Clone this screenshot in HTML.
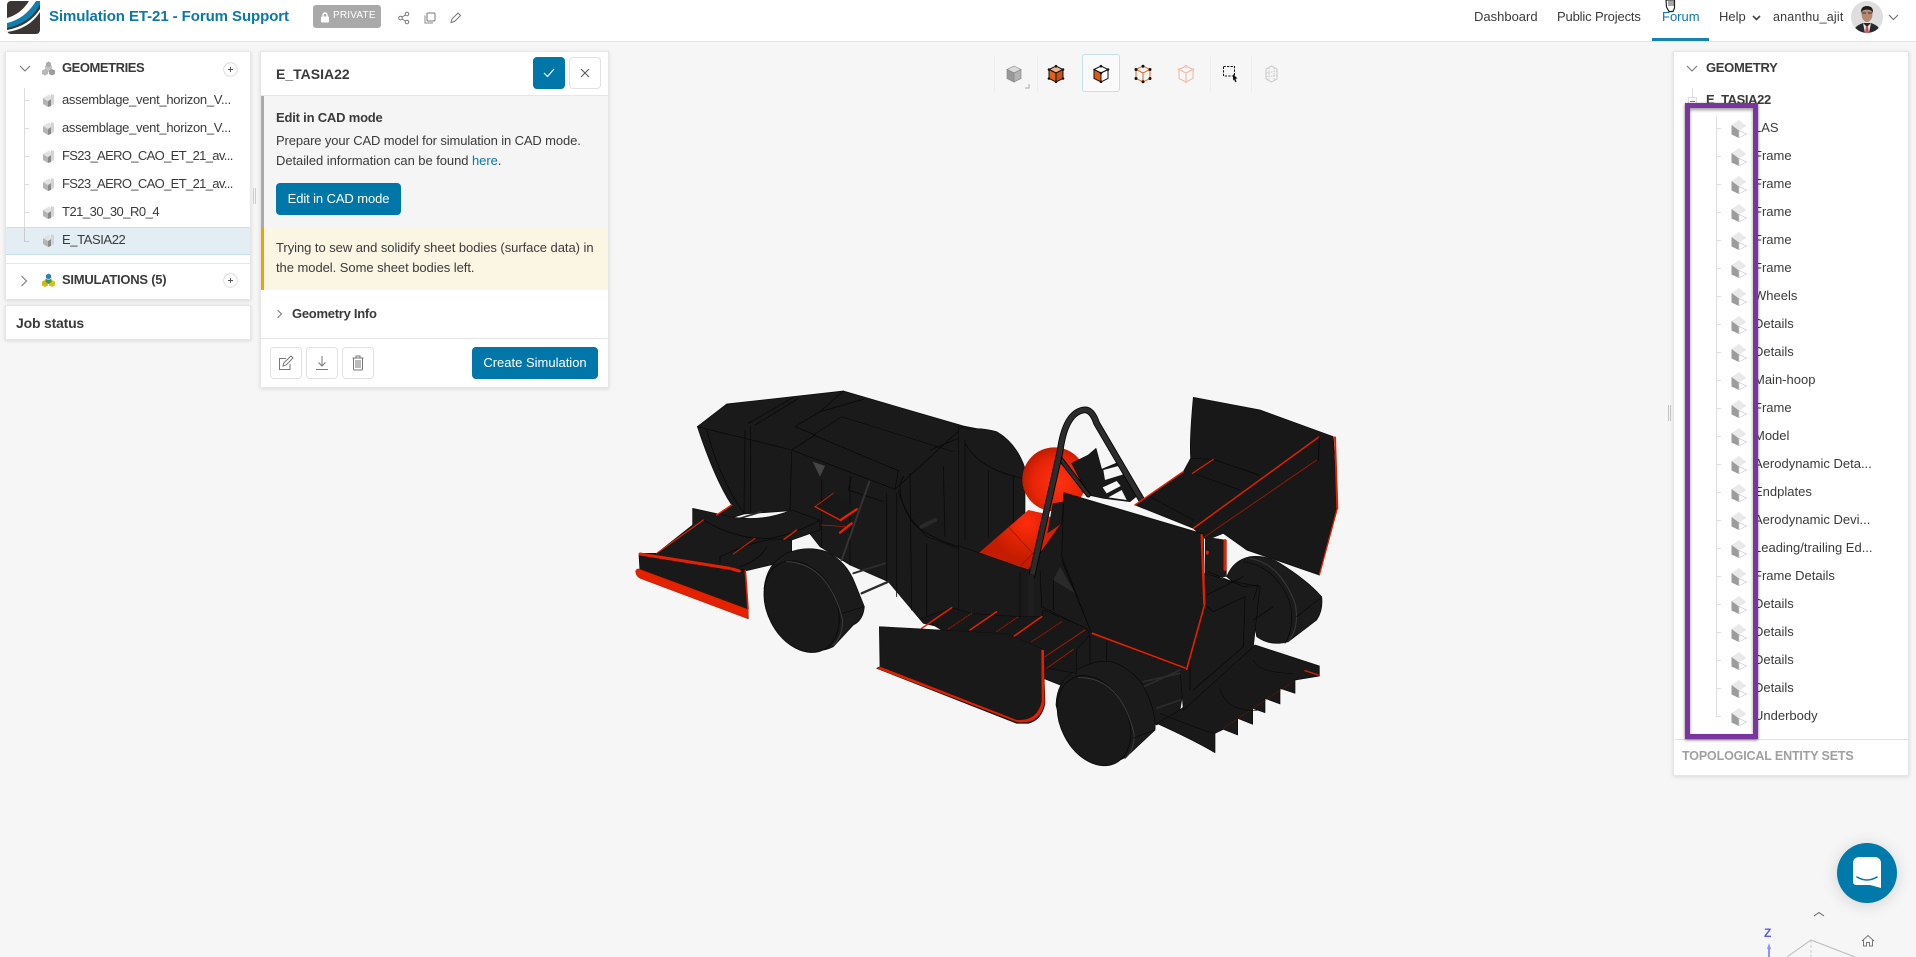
<!DOCTYPE html>
<html><head><meta charset="utf-8"><title>Simulation ET-21</title>
<style>
html,body{margin:0;padding:0;width:1916px;height:957px;overflow:hidden;background:#f6f6f6;font-family:"Liberation Sans",sans-serif;color:#3a3a3a}
.t{position:absolute;white-space:nowrap;height:20px;line-height:20px;font-size:13px}
.b{font-weight:bold}
.box{position:absolute;box-sizing:border-box}
.panel{position:absolute;box-sizing:border-box;background:#fff;border:1px solid #e6e6e6;box-shadow:0 1px 4px rgba(0,0,0,.12)}
.btn{position:absolute;box-sizing:border-box;background:#0077a8;border-radius:4px;color:#fff;text-align:center;font-size:13px}
.ib{position:absolute;box-sizing:border-box;background:#fff;border:1px solid #e2e2e2;border-radius:4px}
svg{position:absolute;overflow:visible}
</style></head><body>

<!-- CAR -->
<svg style="left:0;top:0" width="1916" height="957" viewBox="0 0 1916 957" stroke-linejoin="round" stroke-linecap="round">
<defs>
<radialGradient id="hel" cx=".55" cy=".55" r=".55"><stop offset="0" stop-color="#ff3210"/><stop offset=".7" stop-color="#e82408"/><stop offset="1" stop-color="#c41c00"/></radialGradient>
<radialGradient id="seat" gradientUnits="userSpaceOnUse" cx="200" cy="430" r="110"><stop offset="0" stop-color="#ff2c0c"/><stop offset="1" stop-color="#c41c00"/></radialGradient>
</defs>

<!-- group A -->
<g transform="translate(620 380) scale(.33333)">
<path d="M232,140 L320,72 L670,33 L1030,138 L1090,150 L1090,770 L910,730 L805,605 L690,555 L600,500 L515,392 L372,402 L340,412 L290,405 L335,375 Q285,300 232,140Z" fill="#1a1a1a" stroke="#0a0a0a" stroke-width="2"/>
<g fill="none" stroke="#0a0a0a" stroke-width="2.500">
<path d="M232,140 L395,180 L515,210 L825,328 L1030,140"/>
<path d="M580,165 L835,272 L825,328"/>
<path d="M525,140 L585,165 L515,210"/>
<path d="M525,140 L600,95 L670,33"/>
<path d="M385,130 L520,52"/><path d="M405,135 L535,55"/>
<path d="M600,95 L730,58"/><path d="M580,165 L665,110 L1000,215" stroke-width="2"/>
<path d="M375,150 L372,400"/><path d="M392,140 L392,395"/>
<path d="M260,150 Q300,300 372,400"/>
<path d="M515,215 L510,390"/><path d="M605,300 L605,500"/>
<path d="M690,290 L690,555"/><path d="M695,290 L685,330 L790,365"/><path d="M800,340 L800,610"/><path d="M830,340 L830,650"/>
<path d="M870,280 L875,690"/><path d="M920,490 L920,720"/><path d="M970,260 L975,470"/>
<path d="M850,290 Q820,340 880,430 Q930,480 1080,520" stroke-width="3"/>
<path d="M835,330 Q850,400 920,470 Q980,490 1080,535" stroke-width="2"/>
<path d="M930,210 L1040,165"/>
</g>
<path d="M578,245 L615,258 L600,290Z" fill="#454545"/>
<path d="M905,440 L945,420" stroke="#2a2a2a" stroke-width="12"/>
<path d="M748,305 L665,540" stroke="#333" stroke-width="6"/>
<path d="M585,380 L640,340 L710,388 L660,420Z" fill="#181818"/>
<path d="M585,380 L640,340" stroke="#e02000" stroke-width="2.500" fill="none"/>
<path d="M585,380 L660,420" stroke="#e62200" stroke-width="4" fill="none"/>
<path d="M662,420 L710,388" stroke="#e62200" stroke-width="7" fill="none"/>
<path d="M660,458 L695,430" stroke="#e62200" stroke-width="7" fill="none"/>
<path d="M700,580 L795,550" stroke="#2c2c2c" stroke-width="6"/>
<path d="M725,640 L805,605" stroke="#2c2c2c" stroke-width="7"/>
<path d="M360,415 L425,395" stroke="#2c2c2c" stroke-width="5"/>
<!-- front wing top -->
<path d="M218,385 L340,412 Q430,425 515,390 L600,420 L600,450 L515,480 L515,540 L380,572 L330,565 L60,520 L110,520 L218,435Z" fill="#1a1a1a" stroke="#0a0a0a" stroke-width="2"/>
<g fill="none" stroke="#0a0a0a" stroke-width="2.500">
<path d="M300,530 Q430,470 490,478 L515,480"/><path d="M300,530 L300,550"/><path d="M360,560 Q420,540 440,500"/>
<path d="M250,420 Q350,480 450,475 Q530,460 600,420"/>
</g>
<path d="M57,525 L375,570 L385,715 L60,575Z" fill="#191919" stroke="#0a0a0a" stroke-width="2"/>
<path d="M47,574 Q48,565 58,567 L385,688 L385,717 L60,595 Q47,588 47,574Z" fill="#e42200" stroke="#7a1000" stroke-width="1"/>
<path d="M60,522 L330,565" stroke="#e42200" stroke-width="9" fill="none"/>
<path d="M337,567 L358,573" stroke="#e42200" stroke-width="9" fill="none"/>
<path d="M376,572 L384,686" stroke="#e02000" stroke-width="5" fill="none"/>
<path d="M250,420 L110,520" stroke="#e42200" stroke-width="3.500" fill="none"/>
<path d="M335,375 L290,405" stroke="#e42200" stroke-width="4.500" fill="none"/>
<path d="M405,475 L340,522" stroke="#d82000" stroke-width="3" fill="none"/>
<path d="M530,450 L492,478" stroke="#e42200" stroke-width="4" fill="none"/>
<path d="M605,435 L680,440" stroke="#c01c00" stroke-width="2" fill="none"/>
<!-- wheel -->
<path d="M432,625 Q440,550 500,520 Q560,495 620,515 Q680,545 705,610 L733,680 Q730,720 700,735 L640,800 Q590,825 530,800 Q450,730 432,625Z" fill="#1b1b1b" stroke="#080808" stroke-width="2"/>
<ellipse cx="545" cy="680" rx="103" ry="145" transform="rotate(-27 545 680)" fill="#191919" stroke="#080808" stroke-width="2.500"/>
<path d="M500,545 Q625,550 668,720 Q668,770 640,795" fill="none" stroke="#3c3c3c" stroke-width="3"/>
<path d="M665,700 L733,680" fill="none" stroke="#0a0a0a" stroke-width="2"/>
</g>

<!-- group B -->
<g transform="translate(960 380) scale(.33333)">
<path d="M-5,140 L30,148 Q60,142 110,155 Q170,190 195,265 L195,420 L60,520 L-5,500Z" fill="#1a1a1a" stroke="#0a0a0a" stroke-width="2"/>
<g fill="none" stroke="#0a0a0a" stroke-width="2.500"><path d="M15,180 L15,480"/><path d="M85,270 L85,470"/><path d="M160,290 L160,430"/><path d="M15,190 Q60,270 190,295"/></g>
<circle cx="283" cy="298" r="96" fill="url(#hel)"/>
<path d="M55,520 L205,390 L250,400 L305,430 L230,570 L205,572 L180,560Z" fill="url(#seat)"/>
<path d="M145,440 L218,520 M218,520 L180,560 M218,520 L232,560" stroke="#8a1400" stroke-width="2" fill="none"/>
<path d="M278,370 L310,365 L305,430 L262,460Z" fill="#1b1b1b"/>
<path d="M-5,497 L205,570 L305,430 L312,338 L305,530 L395,760 L680,870 L660,990 L590,1035 L500,985 L300,915 L250,895 L-5,800Z" fill="#1a1a1a" stroke="#0a0a0a" stroke-width="2"/>
<path d="M300,560 L345,640 L280,600Z" fill="#2a2a2a"/>
<g fill="none" stroke="#0a0a0a" stroke-width="2.500">
<path d="M180,580 L180,720"/><path d="M240,570 L245,680 L375,745"/><path d="M280,600 L280,690"/><path d="M305,540 L395,760"/>
<path d="M390,770 L390,850"/><path d="M440,785 L440,850"/>
</g>
<!-- rear stays -->
<path d="M335,250 L385,225 L408,205 L425,268 L480,245 L540,340 L510,365 L430,355 L385,345Z" fill="#191919" stroke="#0a0a0a" stroke-width="2"/>
<path d="M430,270 L475,258 L490,283 L435,300Z M428,322 L470,303 L482,318 L440,340Z M445,352 L485,330 L500,360Z" fill="#f6f6f6"/>
<path d="M300,235 L385,345" stroke="#000" stroke-width="15" fill="none"/><path d="M300,235 L385,345" stroke="#2a2a2a" stroke-width="10" fill="none"/>
<path d="M215,590 L300,215 Q315,100 370,90 Q395,85 410,130 L545,360" stroke="#000" stroke-width="20" fill="none"/>
<path d="M215,590 L300,215 Q315,100 370,90 Q395,85 410,130 L545,360" stroke="#2c2c2c" stroke-width="15" fill="none"/>
<path d="M213,590 L213,730" stroke="#1e1e1e" stroke-width="18" fill="none"/>
<!-- rear wing + deck solid -->
<path d="M700,52 L900,90 L1120,170 L1132,385 L1078,585 L860,510 L790,460 L740,480 L700,445 L525,375 L670,275 L692,235 Q688,180 700,52Z" fill="#181818" stroke="#0a0a0a" stroke-width="2"/>
<path d="M692,235 L760,238 L900,285 M570,350 L700,420 L690,440 M700,280 L840,330" stroke="#0a0a0a" stroke-width="2" fill="none"/>
<path d="M760,238 L895,285" stroke="#0c0c0c" stroke-width="2" fill="none"/>
<path d="M700,445 L1078,170" stroke="#e02000" stroke-width="4.500" fill="none"/>
<path d="M735,470 L1070,240" stroke="#a81800" stroke-width="2.500" fill="none"/>
<path d="M1078,170 L1075,240" stroke="#0a0a0a" stroke-width="3" fill="none"/>
<path d="M1125,172 L1132,385" stroke="#e02000" stroke-width="6" fill="none"/>
<path d="M1132,385 L1078,585" stroke="#e02000" stroke-width="4" fill="none"/>
<path d="M525,375 L670,275" stroke="#e02000" stroke-width="4.500" fill="none"/>
<path d="M697,280 L760,238" stroke="#e02000" stroke-width="3.500" fill="none"/>
<path d="M735,470 L800,480 L800,590 L735,600Z" fill="#1a1a1a"/>
<path d="M795,482 L795,568" stroke="#e02000" stroke-width="9" fill="none"/>
<path d="M742,516 L742,520" stroke="#e02000" stroke-width="8" fill="none"/>
<!-- rear wheel -->
<path d="M800,590 Q820,540 870,530 Q920,525 960,550 Q1040,600 1085,650 Q1090,690 1070,720 L985,785 Q930,800 890,770 L870,650Z" fill="#1b1b1b" stroke="#080808" stroke-width="2"/>
<path d="M870,535 Q960,550 1005,670 Q1020,740 985,785" fill="none" stroke="#3a3a3a" stroke-width="3"/>
<path d="M850,545 Q950,560 990,670 Q1005,740 975,790" fill="none" stroke="#080808" stroke-width="2"/>
<path d="M1010,710 L1080,655" fill="none" stroke="#0a0a0a" stroke-width="2"/>
<!-- diffuser -->
<path d="M885,795 L1078,858 L1078,888 L1005,900 L1005,940 L960,925 L960,972 L915,955 L915,998 L878,985 L878,1033 L833,1015 L833,1065 L790,1048 L765,1060 L765,1118 Q700,1080 590,1030 L660,990Z" fill="#191919" stroke="#0a0a0a" stroke-width="2"/>
<path d="M790,1045 L1000,905" stroke="#8a1400" stroke-width="1.600" stroke-dasharray="3 3" fill="none"/>
<path d="M1035,872 L1075,885" stroke="#e02000" stroke-width="4" fill="none"/>
<path d="M600,1000 Q720,1050 765,1060 M780,925 Q800,1000 900,990 M880,840 Q900,880 1000,880" stroke="#0a0a0a" stroke-width="2" fill="none"/>
<!-- rear box -->
<path d="M735,580 L800,600 L900,620 L880,800 L670,990 L660,870 L735,675Z" fill="#1a1a1a" stroke="#0a0a0a" stroke-width="2"/>
<path d="M745,575 L850,620 L895,615 L880,660 M690,930 L690,830 M700,930 L850,800 L855,650 L760,695 L735,675 M740,645 L850,590 M880,720 L940,680" stroke="#0a0a0a" stroke-width="2.500" fill="none"/>
<path d="M530,930 L660,870 M550,905 L660,880 M590,985 L660,960" stroke="#2c2c2c" stroke-width="5" fill="none"/>
<!-- side panel -->
<path d="M312,338 L730,462 L735,675 L680,870 L395,760 L305,530Z" fill="#181818" stroke="#0a0a0a" stroke-width="2"/>
<path d="M725,465 L733,672" stroke="#e02000" stroke-width="7" fill="none"/>
<path d="M733,677 L680,868" stroke="#e02000" stroke-width="5" fill="none"/>
<path d="M397,760 L675,864" stroke="#e02000" stroke-width="5" fill="none"/>
<!-- right front wheel -->
<path d="M288,975 Q290,900 350,870 Q400,840 450,845 Q500,855 545,910 Q590,990 585,1050 L500,1130 Q450,1160 400,1140 Q310,1080 288,975Z" fill="#1b1b1b" stroke="#080808" stroke-width="2"/>
<ellipse cx="402" cy="1022" rx="100" ry="143" transform="rotate(-27 402 1022)" fill="#191919" stroke="#080808" stroke-width="2.500"/>
<path d="M355,893 Q480,890 522,1060 Q525,1110 495,1135" fill="none" stroke="#3a3a3a" stroke-width="3"/>
<path d="M518,1075 L585,1050" fill="none" stroke="#0a0a0a" stroke-width="2"/>
</g>

<!-- group C lower front wing -->
<g transform="translate(620 560) scale(.33333)">
<path d="M905,175 L995,143 L1055,160 L1195,170 L1265,170 L1270,150 L1400,205 L1410,225 L1370,268 L1370,340 L1280,325 L1265,280 L1000,230 Z" fill="#181818" stroke="#0a0a0a" stroke-width="2"/>
<g fill="none">
<path d="M905,205 L995,143" stroke="#e42200" stroke-width="4.500"/>
<path d="M985,207 L1055,160" stroke="#9c1600" stroke-width="3" stroke-dasharray="5 4"/>
<path d="M1050,210 L1130,155" stroke="#e42200" stroke-width="4.500"/>
<path d="M1130,215 L1195,170" stroke="#9c1600" stroke-width="3" stroke-dasharray="5 4"/>
<path d="M1183,228 L1265,170" stroke="#e42200" stroke-width="4.500"/>
<path d="M1235,245 L1325,185" stroke="#9c1600" stroke-width="3" stroke-dasharray="5 4"/>
<path d="M1275,290 L1395,210" stroke="#c01c00" stroke-width="2.500"/>
<path d="M1280,325 L1360,268" stroke="#a81800" stroke-width="3" stroke-dasharray="5 3"/>
</g>
<path d="M778,200 L905,207 L1160,222 L1255,262 L1270,270 L1275,430 Q1265,480 1225,490 L1190,490 L770,325 L780,320Z" fill="#191919" stroke="#0a0a0a" stroke-width="2"/>
<path d="M772,326 L1190,486 Q1258,496 1274,430 L1272,270 L1262,268 L1262,430 Q1250,478 1190,474 L780,320Z" fill="#e02000"/>
<path d="M788,323 L1190,480 Q1252,484 1265,425 L1264,268 L1255,262 L1160,222 L905,207 L778,200Z" fill="#191919"/>
</g>
</svg>

<!-- header -->
<div class="box" style="left:0;top:0;width:1916px;height:42px;background:#fff;border-bottom:1px solid #e3e3e3"></div>
<svg style="left:7px;top:1px" width="33" height="33" viewBox="0 0 33 33">
<rect width="33" height="33" rx="4" fill="#3b3633"/>
<path d="M0,22 Q18,18 29,0 L33,0 L33,3 Q24,22 0,27Z" fill="#0d7fb0"/>
<path d="M0,17 Q14,13 22,0 L29,0 Q18,18 0,22Z" fill="#fff"/>
<path d="M0,29 Q22,25 33,8 L33,11 Q22,28 0,31Z" fill="#fff"/>
</svg>
<div class="t b" style="left:49px;top:7px;font-size:15px;color:#0b78a8;letter-spacing:-.08px">Simulation ET-21 - Forum Support</div>
<div class="box" style="left:313px;top:5px;width:68px;height:23px;background:#a9a9a9;border-radius:3px"></div>
<svg style="left:320px;top:12px" width="10" height="11" viewBox="0 0 10 11"><rect x="1" y="4.500" width="8" height="6" rx="1" fill="#fff"/><path d="M3,5V3a2,2 0 0 1 4,0V5" fill="none" stroke="#fff" stroke-width="1.400"/></svg>
<div class="t" style="left:333px;top:6px;font-size:10px;color:#fff;letter-spacing:.2px">PRIVATE</div>
<svg style="left:398px;top:11px" width="64" height="14" viewBox="0 0 64 14" fill="none" stroke="#777" stroke-width="1">
<circle cx="2.500" cy="7" r="1.800"/><circle cx="9" cy="3" r="1.800"/><circle cx="9" cy="11" r="1.800"/><path d="M4,6L7.500,4M4,8L7.500,10"/>
<rect x="29" y="2" width="8" height="8" rx="1"/><path d="M27,4.500V12h8" stroke="#888"/>
<path d="M53,11.500l1-3.500l6-6l2.500,2.500l-6,6z"/>
</svg>

<div class="t" style="left:1474px;top:7px;font-size:13px">Dashboard</div>
<div class="t" style="left:1557px;top:7px;font-size:13px;letter-spacing:-.15px">Public Projects</div>
<div class="t" style="left:1662px;top:7px;font-size:13px;color:#0b78a8">Forum</div>
<div class="box" style="left:1652px;top:38px;width:57px;height:3px;background:#1584b4"></div>
<div class="t" style="left:1719px;top:7px;font-size:13px">Help</div>
<svg style="left:1752px;top:15px" width="9" height="6" viewBox="0 0 9 6"><path d="M1,1l3.500,3.500l3.500,-3.500" fill="none" stroke="#444" stroke-width="1.600"/></svg>
<div class="t" style="left:1773px;top:7px;font-size:12.500px;letter-spacing:.2px">ananthu_ajit</div>
<svg style="left:1851px;top:1px" width="32" height="32" viewBox="0 0 32 32">
<clipPath id="av"><circle cx="16" cy="16" r="16"/></clipPath>
<g clip-path="url(#av)"><rect width="32" height="32" fill="#dedede"/>
<path d="M2,32 Q3,25 12,22 L20,22 Q29,25 30,32Z" fill="#262a2c"/>
<path d="M12,22 L16,26 L20,22 L18,32 L14,32Z" fill="#e8e8e8"/>
<path d="M15,25 L17,25 L18,32 L14,32Z" fill="#c9515c"/>
<ellipse cx="16" cy="13" rx="5.500" ry="8" fill="#b58a70"/>
<path d="M10,12 Q9.500,5 16,5 Q22.500,5 22,12 Q21,8.500 16,8.500 Q11,8.500 10,12Z" fill="#1c1b1b"/>
<path d="M11,12h4M17,12h4" stroke="#333" stroke-width="1"/></g>
</svg>
<svg style="left:1888px;top:14px" width="11" height="7" viewBox="0 0 11 7"><path d="M1,1l4.500,4.500l4.500,-4.500" fill="none" stroke="#666" stroke-width="1"/></svg>
<svg style="left:1663px;top:0" width="13" height="13" viewBox="0 0 13 13"><path d="M3,0 L3.500,7 L6,11.500 H10 L11.500,8 V0Z" fill="#fff" stroke="#222" stroke-width="1.200"/><path d="M6,1V6M8,1V6M10,1V6" stroke="#222" stroke-width=".8"/></svg>

<!-- left panel -->
<svg width="0" height="0" style="position:absolute">
<symbol id="cl" viewBox="0 0 13 15"><path d="M1,5 L6,8 V14 L1,11Z" fill="#b5b5b5"/><path d="M6,8 L9,6 V13 L6,14Z" fill="#8a8a8a"/><path d="M1,5 L7,1.500 L9,3 V6 L6,8Z" fill="#e2e2e2"/><path d="M9,1 L12,2 V11 L9,13Z" fill="#d4d4d4"/></symbol>
<symbol id="cr" viewBox="0 0 16 18"><path d="M0.500,5 L8,0 L15.500,6 L8,10.500Z" fill="#e9e9e9"/><path d="M0.500,5 L8,10.500 V18 L0.500,14.500Z" fill="#9c9c9c"/><path d="M8,10.500 L15.500,14 L8,18Z" fill="#fff" stroke="#ccc" stroke-width=".7"/></symbol>
</svg>
<div class="panel" style="left:5px;top:51px;width:246px;height:249px"></div>
<svg style="left:19px;top:65px" width="12" height="8" viewBox="0 0 12 8"><path d="M1,1l5,5l5,-5" fill="none" stroke="#777" stroke-width="1.100"/></svg>
<svg style="left:41px;top:61px" width="15" height="15" viewBox="0 0 15 15"><path d="M4,5L7.500,3L11,5V9L7.500,11L4,9Z" fill="#c4c4c4"/><path d="M7.500,0.500L10,2V5L7.500,6.500L5,5V2Z" fill="#aaa"/><path d="M1,9.500L4,8L7,9.500V13L4,14.500L1,13Z" fill="#b8b8b8"/><path d="M8,9.500L11,8L14,9.500V13L11,14.500L8,13Z" fill="#9c9c9c"/></svg>
<div class="t b" style="left:62px;top:58px;font-size:13px;letter-spacing:-.45px">GEOMETRIES</div>
<svg style="left:223px;top:62px" width="15" height="15" viewBox="0 0 15 15"><circle cx="7.500" cy="7.500" r="6.800" fill="#fff" stroke="#ddd"/><path d="M5,7.500h5M7.500,5v5" stroke="#555" stroke-width="1"/></svg>
<div class="box" style="left:24px;top:88px;width:1px;height:153px;background:#dcdcdc"></div>
<div class="box" style="left:24px;top:100px;width:5px;height:1px;background:#dcdcdc"></div>
<div class="box" style="left:24px;top:128px;width:5px;height:1px;background:#dcdcdc"></div>
<div class="box" style="left:24px;top:156px;width:5px;height:1px;background:#dcdcdc"></div>
<div class="box" style="left:24px;top:184px;width:5px;height:1px;background:#dcdcdc"></div>
<div class="box" style="left:24px;top:212px;width:5px;height:1px;background:#dcdcdc"></div>
<div class="box" style="left:6px;top:227px;width:244px;height:28px;background:#e2eef4;border-top:1px solid #c7dfea;border-bottom:1px solid #c7dfea"></div>
<div class="box" style="left:24px;top:228px;width:1px;height:13px;background:#c9c9c9"></div>
<div class="box" style="left:24px;top:241px;width:5px;height:1px;background:#c9c9c9"></div>
<svg style="left:42px;top:93px" width="13" height="15"><use href="#cl"/></svg>
<svg style="left:42px;top:121px" width="13" height="15"><use href="#cl"/></svg>
<svg style="left:42px;top:149px" width="13" height="15"><use href="#cl"/></svg>
<svg style="left:42px;top:177px" width="13" height="15"><use href="#cl"/></svg>
<svg style="left:42px;top:205px" width="13" height="15"><use href="#cl"/></svg>
<svg style="left:42px;top:233px" width="13" height="15"><use href="#cl"/></svg>
<div class="t" style="left:62px;top:90px;letter-spacing:-.3px">assemblage_vent_horizon_V...</div>
<div class="t" style="left:62px;top:118px;letter-spacing:-.3px">assemblage_vent_horizon_V...</div>
<div class="t" style="left:62px;top:146px;letter-spacing:-.65px">FS23_AERO_CAO_ET_21_av...</div>
<div class="t" style="left:62px;top:174px;letter-spacing:-.65px">FS23_AERO_CAO_ET_21_av...</div>
<div class="t" style="left:62px;top:202px;letter-spacing:-.5px">T21_30_30_R0_4</div>
<div class="t" style="left:62px;top:230px;letter-spacing:-.4px">E_TASIA22</div>
<div class="box" style="left:6px;top:263px;width:244px;height:1px;background:#e6e6e6"></div>
<svg style="left:20px;top:275px" width="8" height="12" viewBox="0 0 8 12"><path d="M1.500,1l5,5l-5,5" fill="none" stroke="#777" stroke-width="1.100"/></svg>
<svg style="left:41px;top:273px" width="15" height="15" viewBox="0 0 15 15"><path d="M7.500,0.500L10,2V5L7.500,6.500L5,5V2Z" fill="#2f7fb5"/><path d="M1,8.500L4,7L7,8.500V12.500L4,14L1,12.500Z" fill="#d8b818"/><path d="M8,8.500L11,7L14,8.500V12.500L11,14L8,12.500Z" fill="#e0c020"/><path d="M4.500,5.500L7.500,7L10.500,5.500V9L7.500,11L4.500,9Z" fill="#3d9a46"/></svg>
<div class="t b" style="left:62px;top:270px;font-size:13px;letter-spacing:-.25px">SIMULATIONS (5)</div>
<svg style="left:223px;top:273px" width="15" height="15" viewBox="0 0 15 15"><circle cx="7.500" cy="7.500" r="6.800" fill="#fff" stroke="#ddd"/><path d="M5,7.500h5M7.500,5v5" stroke="#555" stroke-width="1"/></svg>
<div class="panel" style="left:5px;top:305px;width:246px;height:35px"></div>
<div class="t b" style="left:16px;top:313px;font-size:14px;letter-spacing:-.2px">Job status</div>

<!-- sash -->
<div class="box" style="left:253px;top:188px;width:3px;height:16px;border-left:1px solid #ccc;border-right:1px solid #ccc"></div>
<div class="box" style="left:1668px;top:405px;width:3px;height:16px;border-left:1px solid #c4c4c4;border-right:1px solid #c4c4c4"></div>

<!-- middle panel -->
<div class="panel" style="left:260px;top:51px;width:349px;height:337px"></div>
<div class="t b" style="left:276px;top:64px;font-size:14px;color:#3a3a3a">E_TASIA22</div>
<div class="btn" style="left:533px;top:57px;width:32px;height:32px"></div>
<svg style="left:543px;top:68px" width="12" height="10" viewBox="0 0 12 10"><path d="M1,5l3.500,3.500L11,1" fill="none" stroke="#fff" stroke-width="1.200"/></svg>
<div class="ib" style="left:569px;top:57px;width:32px;height:32px"></div>
<svg style="left:580px;top:68px" width="10" height="10" viewBox="0 0 10 10"><path d="M1,1l8,8M9,1l-8,8" fill="none" stroke="#555" stroke-width="1"/></svg>
<div class="box" style="left:261px;top:95px;width:347px;height:1px;background:#e6e6e6"></div>
<div class="box" style="left:261px;top:96px;width:347px;height:132px;background:#f5f5f5;border-left:3px solid #a9a9a9"></div>
<div class="t b" style="left:276px;top:108px;font-size:13px;letter-spacing:-.2px">Edit in CAD mode</div>
<div class="t" style="left:276px;top:131px;letter-spacing:-.12px">Prepare your CAD model for simulation in CAD mode.</div>
<div class="t" style="left:276px;top:151px;letter-spacing:-.06px">Detailed information can be found <span style="color:#0b78a8">here</span>.</div>
<div class="btn" style="left:276px;top:183px;width:125px;height:32px;line-height:32px;letter-spacing:-.1px">Edit in CAD mode</div>
<div class="box" style="left:261px;top:228px;width:347px;height:62px;background:#fbf5e4;border-left:3px solid #e0a800"></div>
<div class="t" style="left:276px;top:238px;letter-spacing:-.05px">Trying to sew and solidify sheet bodies (surface data) in</div>
<div class="t" style="left:276px;top:258px;letter-spacing:-.05px">the model. Some sheet bodies left.</div>
<svg style="left:276px;top:309px" width="7" height="10" viewBox="0 0 7 10"><path d="M1.500,1l4,4l-4,4" fill="none" stroke="#777" stroke-width="1"/></svg>
<div class="t b" style="left:292px;top:304px;font-size:13px;letter-spacing:-.27px">Geometry Info</div>
<div class="box" style="left:261px;top:338px;width:347px;height:1px;background:#e6e6e6"></div>
<div class="ib" style="left:270px;top:347px;width:32px;height:32px"></div>
<div class="ib" style="left:306px;top:347px;width:32px;height:32px"></div>
<div class="ib" style="left:342px;top:347px;width:32px;height:32px"></div>
<svg style="left:278px;top:355px" width="16" height="16" viewBox="0 0 16 16" fill="none" stroke="#777" stroke-width="1"><path d="M12,9v5.500H1.500V3.500H8"/><path d="M5,11l.7,-3L13,1l2,2l-7,7z"/></svg>
<svg style="left:315px;top:355px" width="14" height="16" viewBox="0 0 14 16" fill="none" stroke="#777" stroke-width="1"><path d="M7,1V11M3.500,7.500L7,11l3.500,-3.500M1,14.500H13"/></svg>
<svg style="left:352px;top:355px" width="12" height="16" viewBox="0 0 12 16" fill="none" stroke="#777" stroke-width="1"><path d="M.5,3H11.500M4,3V1H8V3"/><rect x="1.500" y="3" width="9" height="12" rx="1"/><path d="M4,5V13M6,5V13M8,5V13"/></svg>
<div class="btn" style="left:472px;top:347px;width:126px;height:32px;line-height:32px">Create Simulation</div>

<!-- viewer toolbar -->
<div class="box" style="left:994px;top:56px;width:1px;height:36px;background:#ededed"></div>
<div class="box" style="left:1037px;top:56px;width:1px;height:36px;background:#ededed"></div>
<div class="box" style="left:1082px;top:54px;width:38px;height:38px;background:#fafafa;border:1px solid #c4e0ec;border-radius:3px"></div>
<div class="box" style="left:1210px;top:56px;width:1px;height:36px;background:#ededed"></div>
<div class="box" style="left:1251px;top:56px;width:1px;height:36px;background:#ededed"></div>
<svg style="left:1006px;top:65px" width="16" height="18" viewBox="0 0 16 18"><path d="M1,4.500L8,1l7,3.500L8,8Z" fill="#dcdcdc" stroke="#999" stroke-width=".7"/><path d="M1,4.500L8,8V17L1,13.500Z" fill="#999" stroke="#888" stroke-width=".7"/><path d="M15,4.500L8,8V17L15,13.500Z" fill="#b3b3b3" stroke="#888" stroke-width=".7"/></svg>
<svg style="left:1024px;top:83px" width="6" height="6" viewBox="0 0 6 6"><path d="M5,1V5H1" fill="none" stroke="#aaa"/></svg>
<svg style="left:1048px;top:65px" width="16" height="18" viewBox="0 0 16 18" stroke="#111" stroke-width="1"><path d="M1,4.500L8,1l7,3.500L8,8Z" fill="#f3b28e"/><path d="M1,4.500L8,8V17L1,13.500Z" fill="#e0601c"/><path d="M15,4.500L8,8V17L15,13.500Z" fill="#c9521a"/><g fill="#111" stroke="none"><circle cx="8" cy="1.200" r="1.300"/><circle cx="1" cy="4.500" r="1.300"/><circle cx="15" cy="4.500" r="1.300"/><circle cx="8" cy="16.800" r="1.300"/><circle cx="1" cy="13.500" r="1.300"/><circle cx="15" cy="13.500" r="1.300"/></g></svg>
<svg style="left:1093px;top:65px" width="16" height="18" viewBox="0 0 16 18" stroke="#111" stroke-width="1"><path d="M1,4.500L8,1l7,3.500L8,8Z" fill="#fff"/><path d="M1,4.500L8,8V17L1,13.500Z" fill="#d95a18"/><path d="M15,4.500L8,8V17L15,13.500Z" fill="#fff"/><g fill="#111" stroke="none"><circle cx="8" cy="1.200" r="1.300"/><circle cx="8" cy="8" r="1.300"/><circle cx="8" cy="16.800" r="1.300"/><circle cx="15" cy="4.500" r="1.300"/></g></svg>
<svg style="left:1135px;top:65px" width="16" height="18" viewBox="0 0 16 18" fill="none" stroke="#e0601c" stroke-width="1"><path d="M1,4.500L8,1l7,3.500V13.500L8,17L1,13.500ZM1,4.500L8,8l7,-3.500M8,8V17"/><g fill="#111" stroke="none"><circle cx="8" cy="1.200" r="1.500"/><circle cx="1" cy="4.500" r="1.500"/><circle cx="15" cy="4.500" r="1.500"/><circle cx="8" cy="16.800" r="1.500"/><circle cx="1" cy="13.500" r="1.500"/><circle cx="15" cy="13.500" r="1.500"/></g></svg>
<svg style="left:1178px;top:65px" width="16" height="18" viewBox="0 0 16 18" fill="none" stroke="#e8b8a0" stroke-width="1"><path d="M1,4.500L8,1l7,3.500V13.500L8,17L1,13.500ZM1,4.500L8,8l7,-3.500M8,8V17"/><g fill="#f0c8b4" stroke="none"><circle cx="8" cy="1.200" r="1.400"/><circle cx="1" cy="4.500" r="1.400"/><circle cx="15" cy="4.500" r="1.400"/><circle cx="8" cy="16.800" r="1.400"/></g></svg>
<svg style="left:1223px;top:66px" width="15" height="18" viewBox="0 0 15 18"><rect x=".5" y=".5" width="11" height="9.500" fill="none" stroke="#111" stroke-width="1" stroke-dasharray="2.200 1.300"/><path d="M10,8l4.500,4.500l-2,.3l1,3l-1.200,.5l-1.300,-3l-1,1.500z" fill="#111"/></svg>
<svg style="left:1265px;top:65px" width="13" height="18" viewBox="0 0 13 18" fill="none" stroke="#c9c9c9" stroke-width="1"><path d="M1,4L6.500,1L12,4V14L6.500,17L1,14Z"/><path d="M1,8l11,-2M1,12l11,-2M4,3V16M9,3V16" stroke-dasharray="1.500 1"/></svg>

<!-- right panel -->
<div class="panel" style="left:1673px;top:51px;width:236px;height:725px"></div>
<svg style="left:1686px;top:65px" width="12" height="8" viewBox="0 0 12 8"><path d="M1,1l5,5l5,-5" fill="none" stroke="#777" stroke-width="1.100"/></svg>
<div class="t b" style="left:1706px;top:58px;font-size:13px;letter-spacing:-.3px">GEOMETRY</div>
<div class="box" style="left:1692px;top:88px;width:1px;height:10px;background:#dcdcdc"></div>
<div class="box" style="left:1688px;top:97px;width:9px;height:9px;border:1px solid #ddd;background:#fff"></div>
<div class="box" style="left:1690px;top:101px;width:5px;height:1px;background:#777"></div>
<div class="t b" style="left:1706px;top:90px;font-size:13px;letter-spacing:-.4px">E_TASIA22</div>
<div class="box" style="left:1716px;top:116px;width:1px;height:601px;background:#dfdfdf"></div>
<div style="position:absolute;left:1716px;top:128px;width:5px;height:589px;background:repeating-linear-gradient(to bottom,#dfdfdf 0,#dfdfdf 1px,transparent 1px,transparent 28px)"></div>

<svg style="left:1731px;top:120px" width="16" height="18"><use href="#cr"/></svg>
<svg style="left:1731px;top:148px" width="16" height="18"><use href="#cr"/></svg>
<svg style="left:1731px;top:176px" width="16" height="18"><use href="#cr"/></svg>
<svg style="left:1731px;top:204px" width="16" height="18"><use href="#cr"/></svg>
<svg style="left:1731px;top:232px" width="16" height="18"><use href="#cr"/></svg>
<svg style="left:1731px;top:260px" width="16" height="18"><use href="#cr"/></svg>
<svg style="left:1731px;top:288px" width="16" height="18"><use href="#cr"/></svg>
<svg style="left:1731px;top:316px" width="16" height="18"><use href="#cr"/></svg>
<svg style="left:1731px;top:344px" width="16" height="18"><use href="#cr"/></svg>
<svg style="left:1731px;top:372px" width="16" height="18"><use href="#cr"/></svg>
<svg style="left:1731px;top:400px" width="16" height="18"><use href="#cr"/></svg>
<svg style="left:1731px;top:428px" width="16" height="18"><use href="#cr"/></svg>
<svg style="left:1731px;top:456px" width="16" height="18"><use href="#cr"/></svg>
<svg style="left:1731px;top:484px" width="16" height="18"><use href="#cr"/></svg>
<svg style="left:1731px;top:512px" width="16" height="18"><use href="#cr"/></svg>
<svg style="left:1731px;top:540px" width="16" height="18"><use href="#cr"/></svg>
<svg style="left:1731px;top:568px" width="16" height="18"><use href="#cr"/></svg>
<svg style="left:1731px;top:596px" width="16" height="18"><use href="#cr"/></svg>
<svg style="left:1731px;top:624px" width="16" height="18"><use href="#cr"/></svg>
<svg style="left:1731px;top:652px" width="16" height="18"><use href="#cr"/></svg>
<svg style="left:1731px;top:680px" width="16" height="18"><use href="#cr"/></svg>
<svg style="left:1731px;top:708px" width="16" height="18"><use href="#cr"/></svg>

<div class="t" style="left:1754px;top:118px">LAS</div>
<div class="t" style="left:1754px;top:146px">Frame</div>
<div class="t" style="left:1754px;top:174px">Frame</div>
<div class="t" style="left:1754px;top:202px">Frame</div>
<div class="t" style="left:1754px;top:230px">Frame</div>
<div class="t" style="left:1754px;top:258px">Frame</div>
<div class="t" style="left:1754px;top:286px">Wheels</div>
<div class="t" style="left:1754px;top:314px">Details</div>
<div class="t" style="left:1754px;top:342px">Details</div>
<div class="t" style="left:1754px;top:370px">Main-hoop</div>
<div class="t" style="left:1754px;top:398px">Frame</div>
<div class="t" style="left:1754px;top:426px">Model</div>
<div class="t" style="left:1754px;top:454px">Aerodynamic Deta...</div>
<div class="t" style="left:1754px;top:482px">Endplates</div>
<div class="t" style="left:1754px;top:510px">Aerodynamic Devi...</div>
<div class="t" style="left:1754px;top:538px">Leading/trailing Ed...</div>
<div class="t" style="left:1754px;top:566px">Frame Details</div>
<div class="t" style="left:1754px;top:594px">Details</div>
<div class="t" style="left:1754px;top:622px">Details</div>
<div class="t" style="left:1754px;top:650px">Details</div>
<div class="t" style="left:1754px;top:678px">Details</div>
<div class="t" style="left:1754px;top:706px">Underbody</div>

<div class="box" style="left:1674px;top:739px;width:234px;height:1px;background:#e3e3e3"></div>
<div class="t b" style="left:1682px;top:746px;font-size:12.500px;color:#a0a0a0;letter-spacing:-.15px">TOPOLOGICAL ENTITY SETS</div>
<!-- purple annotation -->
<div class="box" style="left:1685px;top:103px;width:73px;height:636px;border:5.500px solid #7a359e;box-shadow:0 1px 3px rgba(0,0,0,.55),inset 0 2px 3px rgba(0,0,0,.4)"></div>

<!-- chat bubble -->
<div class="box" style="left:1837px;top:843px;width:60px;height:60px;border-radius:50%;background:#0079ab;box-shadow:0 2px 16px rgba(0,0,0,.15)"></div>
<svg style="left:1853px;top:857px" width="28" height="32" viewBox="0 0 28 32"><path d="M6,0H22a6,6 0 0 1 6,6V31L17,28H3a3,3 0 0 1 -3,-3V6a6,6 0 0 1 6,-6Z" fill="#fff"/><path d="M4,20Q14,26 24,20" fill="none" stroke="#0079ab" stroke-width="1.600" stroke-linecap="round"/></svg>

<!-- gizmo -->
<svg style="left:1760px;top:905px" width="120" height="52" viewBox="0 0 120 52">
<path d="M54,11l5,-3.500l5,3.500" fill="none" stroke="#666" stroke-width="1"/>
<path d="M27,52L51,35L95,52" fill="none" stroke="#bbb" stroke-width="1"/>
<path d="M51,35V52" stroke="#ccc" stroke-dasharray="3 2" fill="none"/>
<path d="M9,52V41" stroke="#8f8fff" stroke-width="2"/><path d="M9,38l-2,6h4z" fill="#8f8fff"/>
<path d="M102,36l6,-5.500l6,5.500M103.500,35v6h3v-3.500h3v3.500h3v-6" fill="none" stroke="#777" stroke-width="1"/>
</svg>
<div class="t b" style="left:1764px;top:923px;font-size:12px;color:#5a5af0">Z</div>
</body></html>
